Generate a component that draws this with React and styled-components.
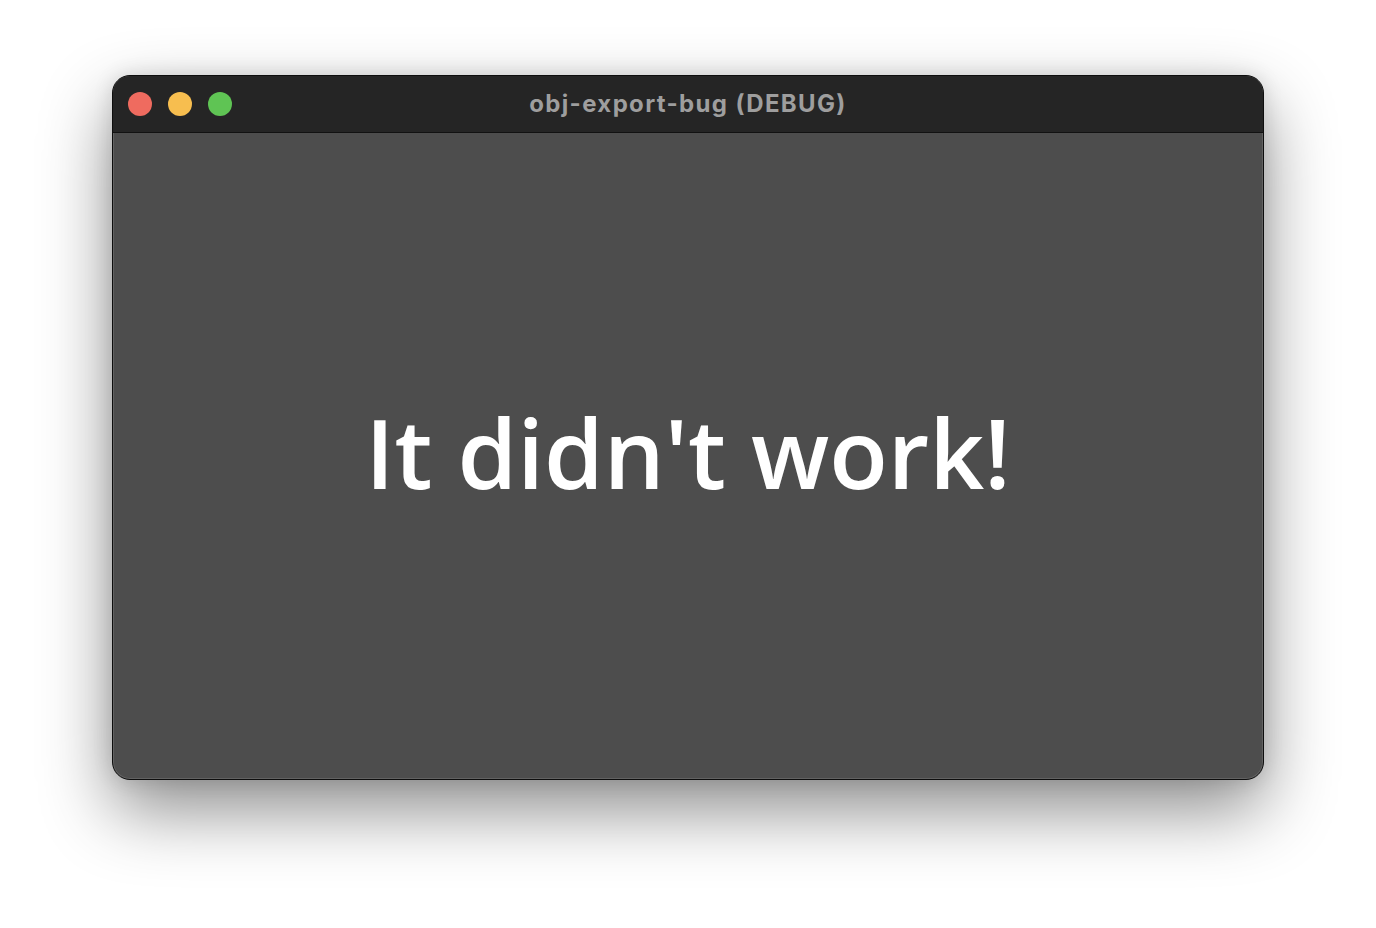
import React from "react";
import styled, { createGlobalStyle } from "styled-components";

const Global = createGlobalStyle`
  html, body {
    margin: 0;
    padding: 0;
    background: #ffffff;
  }
  body {
    font-family: "Inter", "Liberation Sans", sans-serif;
  }
`;

const Desktop = styled.div`
  width: 1376px;
  height: 928px;
  box-sizing: border-box;
  padding: 75px 112px 0 112px;
  overflow: hidden;
`;

const Window = styled.div`
  width: 1152px;
  height: 705px;
  box-sizing: border-box;
  border-radius: 18px;
  border: 1px solid #0e0e0e;
  background: #4d4d4d;
  box-shadow: inset 0 0 0 1px rgba(255, 255, 255, 0.12),
    0 30px 70px rgba(0, 0, 0, 0.45), 0 0 20px rgba(0, 0, 0, 0.12);
  display: flex;
  flex-direction: column;
  overflow: hidden;
`;

const TitleBar = styled.div`
  height: 56px;
  flex-shrink: 0;
  background: #252525;
  border-bottom: 1px solid #121212;
  display: flex;
  align-items: center;
  padding: 0 0 0 15px;
  position: relative;
`;

const Lights = styled.div`
  display: flex;
  gap: 16px;
`;

const Light = styled.span`
  width: 24px;
  height: 24px;
  border-radius: 50%;
  background: ${(p) => p.color};
`;

const Title = styled.div`
  position: absolute;
  left: 0;
  right: 0;
  top: 14px;
  text-align: center;
  font-size: 24px;
  line-height: 28px;
  font-weight: 700;
  color: #9e9e9e;
  pointer-events: none;
  letter-spacing: 1.35px;
`;

const Content = styled.div`
  flex: 1;
  display: flex;
  align-items: center;
  justify-content: center;
  padding-bottom: 8px;
`;

const Message = styled.h1`
  margin: 0;
  font-family: "Open Sans", "Noto Sans", sans-serif;
  font-weight: 600;
  font-size: 96px;
  color: #ffffff;
  line-height: 1;
`;

export default function App() {
  return (
    <>
      <Global />
      <Desktop>
        <Window>
          <TitleBar>
            <Lights>
              <Light color="#ef6b5f" />
              <Light color="#f7be4f" />
              <Light color="#5fc454" />
            </Lights>
            <Title>obj-export-bug (DEBUG)</Title>
          </TitleBar>
          <Content>
            <Message>It didn't work!</Message>
          </Content>
        </Window>
      </Desktop>
    </>
  );
}
